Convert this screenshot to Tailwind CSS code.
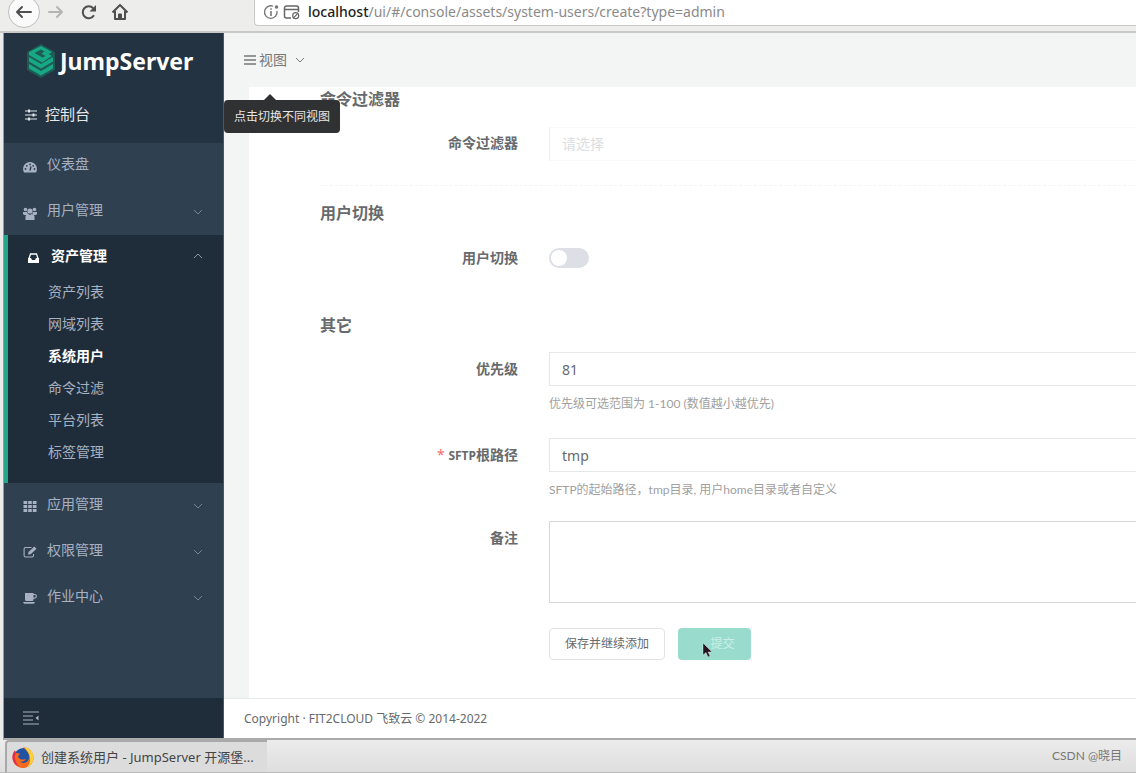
<!DOCTYPE html>
<html lang="zh-CN">
<head>
    <meta charset="UTF-8">
    <meta name="viewport" content="width=device-width, initial-scale=1.0">
    <title>创建系统用户 - JumpServer 开源堡垒机</title>
    <script src="https://cdn.jsdelivr.net/npm/@tailwindcss/browser@4"></script>
    <style>
        body {
            font-family: 'Noto Sans', 'Noto Sans CJK SC', sans-serif;
        }
        .narrow {
            font-family: 'Lato', 'Noto Sans CJK SC', sans-serif;
        }
    </style>
</head>
<body class="bg-[#ebebeb] text-sm text-[#676a6c]">
    <div class="flex h-screen flex-col overflow-hidden">
        <!-- Browser toolbar -->
        <header class="flex h-[33px] shrink-0 border-b-2 border-[#c9c9c9] bg-[#ededec] pl-1">
            <div class="flex h-6 w-[250px] shrink-0 items-center text-[#4f4f4f]">
                <button aria-label="后退" class="ml-1 flex size-8 shrink-0 items-center justify-center rounded-full border border-[#bdbdbd] bg-[#fafafa]">
                    <svg class="size-5" viewBox="0 0 20 20" fill="none" stroke="currentColor" stroke-width="2" stroke-linecap="round" stroke-linejoin="round"><path d="M17 10H3M8 5l-5 5 5 5"/></svg>
                </button>
                <button aria-label="前进" class="ml-1.5 text-[#b4b4b4]">
                    <svg class="size-5" viewBox="0 0 20 20" fill="none" stroke="currentColor" stroke-width="2" stroke-linecap="round" stroke-linejoin="round"><path d="M3 10h13M11 5l5 5-5 5"/></svg>
                </button>
                <button aria-label="刷新" class="ml-3">
                    <svg class="size-5" viewBox="0 0 20 20" fill="none" stroke="currentColor" stroke-width="2"><path d="M16 13.200A6 6 0 1 1 15.200 6.200"/><path d="M18 3v6.500h-6.500z" fill="currentColor" stroke="none"/></svg>
                </button>
                <button aria-label="主页" class="ml-3">
                    <svg class="size-5" viewBox="0 0 20 20" fill="none" stroke="currentColor" stroke-width="2" stroke-linejoin="round"><path d="M2.500 10.500 10 3l7.500 7.500M5 9v8h10V9"/><path d="M8.500 17v-5h3v5" fill="currentColor" stroke-width="1"/></svg>
                </button>
            </div>
            <div class="flex h-[26px] min-w-0 flex-1 items-center rounded-bl border-b border-l border-[#c9c9c9] bg-white pb-0.5 pl-2">
                <svg class="size-4 shrink-0 text-[#777]" viewBox="0 0 16 16" fill="none" stroke="currentColor" stroke-width="1.300"><path d="M10 2.200A6.300 6.300 0 1 0 14 7"/><path d="M8 7v5M8 4.200v1.500" stroke-width="1.600"/><circle cx="13.500" cy="3" r="1.800" fill="currentColor" stroke="none"/></svg>
                <svg class="ml-1 h-4 w-[18px] shrink-0 text-[#666]" viewBox="0 0 18 16" fill="none" stroke="currentColor" stroke-width="1.500"><path d="M8 14H3.500A2 2 0 0 1 1.500 12V4a2 2 0 0 1 2-2h10a2 2 0 0 1 2 2v4M1.500 5.500h14"/><circle cx="12.700" cy="11.700" r="3" stroke-width="1.200"/><path d="m10.700 13.700 4-4" stroke-width="1.200"/></svg>
                <label for="url" class="ml-[7px] font-medium text-[#222]">localhost</label>
                <input id="url" type="text" value="/ui/#/console/assets/system-users/create?type=admin" class="min-w-0 flex-1 text-[#8a8a8a] outline-none">
            </div>
        </header>

        <div class="ml-[3px] flex min-h-0 flex-1 border-b-2 border-l border-b-[#aaa] border-l-[#999]">
            <!-- Sidebar -->
            <aside class="flex w-[220px] shrink-0 flex-col border-r border-[#4b5663] bg-[#2f4050] text-[#a7b1c2]">
                <div class="h-[110px] bg-[#233341] pt-2">
                    <a href="#" class="flex h-10 items-center gap-1 pl-[22px] text-white">
                        <svg class="h-9 w-[30px]" viewBox="0 0 30 36">
                            <path d="M15 1 29 9v18l-14 8L1 27V9z" fill="#1f5a57"/>
                            <path d="M15 3 26 9l-3 2-8-4.500L8.500 10l8 4.500 3-1.500-4-2.500 3-2 7.500 4.500L16 19.500 3 12V9z" fill="#16a983"/>
                            <path d="m3 14 12 7 12-7v4.500l-12 7-12-7z" fill="#16a983"/>
                            <path d="m3 21 12 7 12-7v4.500l-12 7-12-7z" fill="#16a983"/>
                        </svg>
                        <span class="text-[23px] leading-9 font-bold">JumpServer</span>
                    </a>
                    <button class="mt-3 flex h-11 w-full items-center gap-2 pl-[21px] text-[15px] text-[#e4e8eb]">
                        <svg class="size-3" viewBox="0 0 12 12" fill="none" stroke="currentColor" stroke-width="1.200"><path d="M0 2h12M0 6h12M0 10h12"/><path d="M4 .5v3M8.500 4.500v3M4 8.500v3" stroke-width="2"/></svg>
                        控制台
                    </button>
                </div>

                <nav>
                    <a href="#" class="flex h-[46px] items-center pb-1 pl-[19px]">
                        <svg class="mt-1.5 mr-2.5 h-3 w-[14px]" viewBox="0 0 14 12"><path d="M7 1a7 7 0 0 0-6 10.500h12A7 7 0 0 0 7 1z" fill="currentColor"/><g fill="#2f4050"><circle cx="2.500" cy="8" r=".9"/><circle cx="3.800" cy="4.800" r=".9"/><circle cx="7" cy="3.400" r=".9"/><circle cx="10.200" cy="4.800" r=".9"/><circle cx="11.500" cy="8" r=".9"/></g><path d="M7 9.500 8 5.500" stroke="#2f4050" stroke-width="1.400"/></svg>
                        仪表盘
                    </a>
                    <a href="#" class="flex h-[46px] items-center pb-1 pl-[19px]">
                        <svg class="mt-1.5 mr-2.5 h-[13px] w-[14px]" viewBox="0 0 14 13" fill="currentColor"><circle cx="2.500" cy="2.500" r="1.800"/><circle cx="11.500" cy="2.500" r="1.800"/><circle cx="7" cy="4" r="2.600"/><path d="M0 7V5h4l1 2-2 1H1zM14 7V5h-4L9 7l2 1h2zM2.500 13V9l2-2.500L7 8l2.500-1.500 2 2.500v4z"/></svg>
                        用户管理
                        <svg class="mt-1 mr-5 ml-auto size-2.5 opacity-60" viewBox="0 0 10 10" fill="none" stroke="currentColor"><path d="m1 3 4 4 4-4"/></svg>
                    </a>
                    <div class="h-[248px] border-l-4 border-[#23a68a] bg-[#1f2d3b]">
                        <a href="#" class="flex h-[41px] items-center pl-5 font-bold text-white">
                            <svg class="mt-1 mr-3 h-2.5 w-[11px]" viewBox="0 0 11 10" fill="none" stroke="currentColor" stroke-width="1.300"><path d="M1 5.500 2.500 1h6L10 5.500"/><path d="M0 5h3l1 2h3l1-2h3v5H0z" fill="currentColor" stroke="none"/></svg>
                            资产管理
                            <svg class="mr-5 ml-auto size-2.5 opacity-50" viewBox="0 0 10 10" fill="none" stroke="currentColor"><path d="m1 7 4-4 4 4"/></svg>
                        </a>
                        <a href="#" class="flex h-8 items-center pl-10">资产列表</a>
                        <a href="#" class="flex h-8 items-center pl-10">网域列表</a>
                        <a href="#" class="flex h-8 items-center pl-10 font-bold text-white">系统用户</a>
                        <a href="#" class="flex h-8 items-center pl-10">命令过滤</a>
                        <a href="#" class="flex h-8 items-center pl-10">平台列表</a>
                        <a href="#" class="flex h-8 items-center pl-10">标签管理</a>
                    </div>
                    <a href="#" class="flex h-[46px] items-center pb-1 pl-[19px]">
                        <svg class="mt-1 mr-2.5 h-[11px] w-[14px]" viewBox="0 0 13 11" fill="currentColor"><path d="M0 0h3.700v3H0zM4.700 0h3.600v3H4.700zM9.300 0H13v3H9.300zM0 4h3.700v3H0zM4.700 4h3.600v3H4.700zM9.300 4H13v3H9.300zM0 8h3.700v3H0zM4.700 8h3.600v3H4.700zM9.300 8H13v3H9.300z"/></svg>
                        应用管理
                        <svg class="mt-1 mr-5 ml-auto size-2.5 opacity-60" viewBox="0 0 10 10" fill="none" stroke="currentColor"><path d="m1 3 4 4 4-4"/></svg>
                    </a>
                    <a href="#" class="flex h-[46px] items-center pb-1 pl-[19px]">
                        <svg class="mt-1 mr-2.5 h-3 w-[14px]" viewBox="0 0 13 12" fill="none" stroke="currentColor" stroke-width="1.100"><path d="M8 1.500H2A1.500 1.500 0 0 0 .6 3v6.500A1.500 1.500 0 0 0 2 11h6.500A1.500 1.500 0 0 0 10 9.500V8"/><path d="M4.500 8.500 5 6l5.800-5.500L13 2.700 7.200 8.200z" fill="currentColor" stroke="none"/></svg>
                        权限管理
                        <svg class="mt-1 mr-5 ml-auto size-2.5 opacity-60" viewBox="0 0 10 10" fill="none" stroke="currentColor"><path d="m1 3 4 4 4-4"/></svg>
                    </a>
                    <a href="#" class="flex h-[46px] items-center pb-1 pl-[19px]">
                        <svg class="mt-1 mr-2.5 h-3 w-[14px]" viewBox="0 0 14 12"><path d="M2 1h8.500v6.500a1.500 1.500 0 0 1-1.500 1.500H3.500A1.500 1.500 0 0 1 2 7.500zM0 10h12l-1 1.700H1z" fill="currentColor"/><path d="M10 2.500h1.500a1.800 1.800 0 0 1 0 3.700H10" fill="none" stroke="currentColor" stroke-width="1.200"/></svg>
                        作业中心
                        <svg class="mt-1 mr-5 ml-auto size-2.5 opacity-60" viewBox="0 0 10 10" fill="none" stroke="currentColor"><path d="m1 3 4 4 4-4"/></svg>
                    </a>
                </nav>

                <button aria-label="收起菜单" class="mt-auto flex h-10 items-center bg-[#1f2d3b] pl-[19px]">
                    <svg class="h-[14px] w-4" viewBox="0 0 16 14" fill="none" stroke="currentColor" stroke-width="1.200"><path d="M0 1h16M0 5h10M0 9h10M0 13h16"/><path d="M15.500 4.500v5l-3-2.500z" fill="currentColor" stroke="none"/></svg>
                </button>
            </aside>

            <!-- Content -->
            <div class="flex min-w-0 flex-1 flex-col bg-[#f3f4f4]">
                <div class="relative h-[54px] shrink-0 pl-5">
                    <button class="flex h-[54px] items-center text-[#777]">
                        <svg class="mr-0.5 h-3 w-[13px]" viewBox="0 0 13 12" fill="none" stroke="currentColor" stroke-width="1.500"><path d="M0 2h12M0 6h12M0 10h12"/></svg>
                        视图
                        <svg class="ml-2 size-2.5" viewBox="0 0 10 10" fill="none" stroke="currentColor"><path d="m1 3 4 4 4-4"/></svg>
                    </button>
                    <div role="tooltip" class="absolute top-[67px] left-0 z-10 flex h-[33px] items-center rounded bg-[#303133] px-2.5 text-xs text-[#e6e6e6]">
                        点击切换不同视图
                        <svg class="absolute -top-1.5 left-10 h-1.5 w-3" viewBox="0 0 12 6"><path d="M0 6 6 0l6 6z" fill="#303133"/></svg>
                    </div>
                </div>

                <main class="ml-[25px] min-h-0 flex-1 overflow-hidden bg-white pl-[71px]">
                    <form>
                        <h3 class="h-10 text-base leading-6 font-semibold">命令过滤器</h3>
                        <div class="flex">
                            <label for="filter" class="w-[198px] shrink-0 text-right leading-8 font-bold">命令过滤器</label>
                            <select id="filter" class="ml-[31px] h-[34px] min-w-0 flex-1 appearance-none border border-r-0 border-[#f9f9fa] border-l-[#eee] px-3 text-[#dcdde0]">
                                <option>请选择</option>
                            </select>
                        </div>

                        <h3 class="mt-6 h-[63px] border-t border-dashed border-[#f4f4f5] pt-[15px] text-base leading-6 font-semibold">用户切换</h3>
                        <div class="flex items-center">
                            <label for="su" class="w-[198px] shrink-0 text-right leading-5 font-bold">用户切换</label>
                            <input id="su" type="checkbox" class="ml-[31px] flex h-5 w-10 appearance-none items-center rounded-full bg-[#dcdfe6] px-0.5 before:size-4 before:rounded-full before:bg-white">
                        </div>

                        <h3 class="mt-[30px] h-[54px] pt-[15px] text-base leading-6 font-semibold">其它</h3>
                        <div class="flex">
                            <label for="priority" class="w-[198px] shrink-0 text-right leading-[34px] font-bold">优先级</label>
                            <div class="ml-[31px] h-[86px] min-w-0 flex-1">
                                <input id="priority" type="text" value="81" class="h-[34px] w-full border border-r-0 border-[#e5e6e7] px-3">
                                <p class="narrow mt-2 text-xs leading-5 text-[#a0a0a0]">优先级可选范围为 1-100 (数值越小越优先)</p>
                            </div>
                        </div>
                        <div class="flex">
                            <label for="sftp" class="w-[198px] shrink-0 text-right leading-[34px] font-bold"><span class="font-normal text-[#f56c6c]">*</span> <span class="text-xs">SFTP</span>根路径</label>
                            <div class="ml-[31px] h-[83px] min-w-0 flex-1">
                                <input id="sftp" type="text" value="tmp" class="h-[34px] w-full border border-r-0 border-[#e5e6e7] px-3">
                                <p class="narrow mt-2 text-xs leading-5 text-[#a0a0a0]">SFTP的起始路径，tmp目录, 用户home目录或者自定义</p>
                            </div>
                        </div>
                        <div class="flex">
                            <label for="comment" class="w-[198px] shrink-0 text-right leading-[34px] font-bold">备注</label>
                            <textarea id="comment" class="ml-[31px] h-[82px] min-w-0 flex-1 resize-none border border-r-0 border-[#d5d6d7] px-3 py-1.5"></textarea>
                        </div>
                        <div class="mt-[25px] ml-[229px] flex gap-[13px]">
                            <button type="button" class="h-8 rounded-sm border border-[#e2e3e5] px-[15px] text-xs">保存并继续添加</button>
                            <button type="submit" class="relative flex h-8 w-[73px] items-center justify-center rounded-sm bg-[#99dccd] pl-4 text-xs text-[#c9f0e7]">
                                提交
                                <svg class="absolute top-[15px] left-6 h-4 w-2.5" viewBox="0 0 10 16"><path d="M1 0v12l3-2.500L6 14l2-1-2-4h4z" fill="#26131f" stroke="#e8f4f1" stroke-width=".4"/></svg>
                            </button>
                        </div>
                    </form>
                </main>

                <footer class="flex h-10 shrink-0 items-center border-t border-[#e7eaec] bg-white pl-5 text-xs">Copyright · FIT2CLOUD 飞致云 © 2014-2022</footer>
            </div>
        </div>

        <!-- Taskbar -->
        <div class="flex h-[33px] shrink-0 items-center justify-between border-b border-[#bbb] bg-linear-to-b from-[#ececec] to-[#dedede] pl-[5px]">
            <button class="flex h-full w-[262px] items-center gap-1.5 rounded-tl-sm border-t-2 border-l-2 border-[#a9a9a9] bg-[#dcdcdc] pl-1 text-[13px] text-[#444]">
                <svg class="size-6 shrink-0" viewBox="0 0 24 24">
                    <circle cx="12.500" cy="12.500" r="9.500" fill="#2352a5"/>
                    <path d="M12 2c5 0 10 4 10.500 10S18 23 12 23 1 18 1.500 12C1.600 9 2.500 7 4 5.500L5 8l4 .5-2 3c1 2 2 3 4 3s3 0 4-1c-1 4-7 4-7 2 2 4 9 3 10-2 .5-4-1-7-6-11.500z" fill="#f46a1f"/>
                    <path d="M13 2c6 1 10 6 9.500 11-.5 5-3 8-7 9.500 3-3 4-6 3.500-10C18.500 8 16 6 13 2z" fill="#ffd23a"/>
                    <path d="M1.500 12C1.600 9 2.500 7 4 5.500L5 8c-2 4-1 9 3 13.500C4 20 1.500 16 1.500 12z" fill="#e32b4d"/>
                </svg>
                创建系统用户 - JumpServer 开源堡...
            </button>
            <span class="narrow pr-3.5 text-xs text-[#777]">CSDN @晓目</span>
        </div>
    </div>
</body>
</html>
